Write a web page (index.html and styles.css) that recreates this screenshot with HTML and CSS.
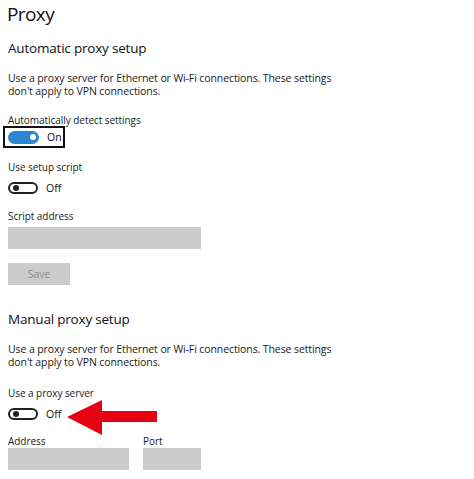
FILE: index.html
```html
<!DOCTYPE html>
<html lang="en">
<head>
<meta charset="utf-8">
<title>Proxy</title>
<link rel="stylesheet" href="styles.css">
</head>
<body>
<main class="page">
  <h1 class="title">Proxy</h1>

  <section class="group">
    <h2 class="heading">Automatic proxy setup</h2>
    <p class="desc">Use a proxy server for Ethernet or Wi-Fi connections. These settings<br>don't apply to VPN connections.</p>

    <div class="label first">Automatically detect settings</div>
    <div class="toggle-row focused">
      <span class="toggle on"><span class="knob"></span></span>
      <span class="state">On</span>
    </div>

    <div class="label gap-toggle">Use setup script</div>
    <div class="toggle-row near">
      <span class="toggle off"><span class="knob"></span></span>
      <span class="state">Off</span>
    </div>

    <div class="label gap-field">Script address</div>
    <div class="input wide"></div>

    <button class="btn" type="button">Save</button>
  </section>

  <section class="group second">
    <h2 class="heading">Manual proxy setup</h2>
    <p class="desc">Use a proxy server for Ethernet or Wi-Fi connections. These settings<br>don't apply to VPN connections.</p>

    <div class="label first lower">Use a proxy server</div>
    <div class="toggle-row near">
      <span class="toggle off"><span class="knob"></span></span>
      <span class="state">Off</span>
    </div>

    <div class="addr-row">
      <div class="addr-col">
        <div class="label tight">Address</div>
        <div class="input addr"></div>
      </div>
      <div class="addr-col">
        <div class="label tight">Port</div>
        <div class="input port"></div>
      </div>
    </div>
  </section>

  <svg class="arrow" width="92" height="37" viewBox="0 0 92 37" aria-hidden="true">
    <polygon points="0,17 35,0 35,11 90,11 90,22 35,22 35,35" fill="#e60012"/>
  </svg>
</main>
</body>
</html>
```

FILE: styles.css
```css
* { box-sizing: border-box; }

html, body {
  margin: 0;
  padding: 0;
  background: #ffffff;
}

body {
  font-family: "Open Sans", "Noto Sans", sans-serif;
  color: #111111;
}

.page {
  position: relative;
  width: 474px;
  height: 479px;
  padding: 2px 0 0 8px;
  overflow: hidden;
}

.title {
  margin: 0 0 0 -1px;
  font-size: 19px;
  line-height: 24px;
  letter-spacing: -0.6px;
  font-weight: 400;
  color: #111;
}

.group {
  display: flex;
  flex-direction: column;
  align-items: flex-start;
  margin-top: 13px;
}

.group.second {
  margin-top: 25px;
}

.heading {
  margin: 0;
  font-size: 13.5px;
  line-height: 18px;
  letter-spacing: -0.2px;
  font-weight: 400;
  color: #111;
}

.desc {
  margin: 15px 0 0 0;
  font-size: 10.5px;
  line-height: 13px;
  letter-spacing: -0.1px;
  color: #1a1a1a;
}

.label {
  font-size: 10px;
  line-height: 12px;
  letter-spacing: -0.05px;
  color: #1a1a1a;
}

.label.first { margin-top: 16px; }
.label.first.lower { margin-top: 18px; }
.label.gap-toggle { margin-top: 13px; }
.label.gap-field { margin-top: 11px; }
.label.tight { margin-bottom: 1px; }

.toggle-row {
  display: flex;
  align-items: center;
  gap: 8px;
  height: 22px;
  font-size: 10.5px;
  color: #111;
}

.toggle-row.near { margin-top: 4px; }

.toggle-row.focused {
  margin-left: -5px;
  width: 62px;
  padding-left: 3px;
  border: 2px solid #111;
}

.toggle {
  position: relative;
  display: flex;
  align-items: center;
  width: 31px;
  height: 13px;
  border-radius: 7px;
}

.toggle.on {
  background: #2a86d1;
  justify-content: flex-end;
  padding-right: 3px;
}

.toggle.off {
  border: 2px solid #222;
  padding-left: 3px;
  height: 12px;
  width: 30px;
}

.knob {
  width: 6px;
  height: 6px;
  border-radius: 50%;
}

.toggle.on .knob { background: #fff; }
.toggle.off .knob { background: #222; }

.state { line-height: 12px; }

.input {
  height: 22px;
  background: #cccccc;
}

.input.wide { width: 193px; margin-top: 5px; }

.btn {
  margin-top: 14px;
  width: 62px;
  height: 22px;
  border: 0;
  padding: 0;
  background: #cccccc;
  color: #8c8c8c;
  font-family: inherit;
  font-size: 10.5px;
}

.addr-row {
  display: flex;
  gap: 14px;
  margin-top: 10px;
}

.input.addr { width: 121px; }
.input.port { width: 58px; }

.arrow {
  position: absolute;
  left: 67px;
  top: 400px;
}
```
